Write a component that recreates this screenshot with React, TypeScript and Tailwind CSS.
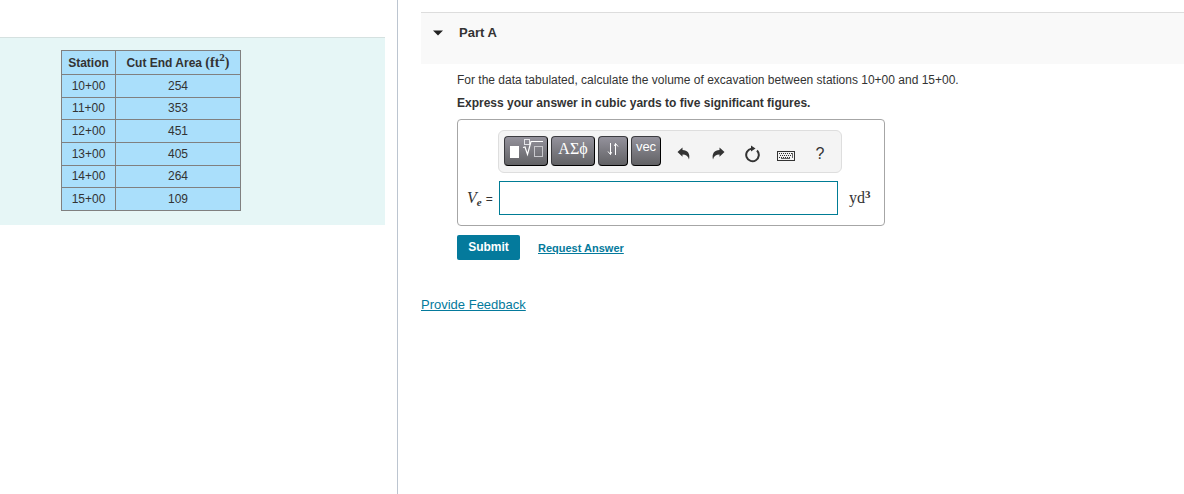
import type { ReactNode } from 'react';

const rows: [string, number][] = [
  ['10+00', 254],
  ['11+00', 353],
  ['12+00', 451],
  ['13+00', 405],
  ['14+00', 264],
  ['15+00', 109],
];

function DataTable() {
  return (
    <table className="ml-[61px] h-[161px] w-[180px] border-collapse bg-[#aadffb] text-center text-xs leading-4">
      <thead>
        <tr className="h-6">
          <th className="w-[54px] border border-[#808080] p-0">Station</th>
          <th className="border border-[#808080] p-0">
            Cut End Area <span className="font-['Liberation_Serif',serif] text-sm leading-4">(ft<sup className="text-[11px] leading-none">2</sup>)</span>
          </th>
        </tr>
      </thead>
      <tbody>
        {rows.map(([station, area]) => (
          <tr key={station}>
            <td className="border border-[#808080] p-0">{station}</td>
            <td className="border border-[#808080] p-0">{area}</td>
          </tr>
        ))}
      </tbody>
    </table>
  );
}

function KeyButton({ label, className, children }: { label: string; className: string; children: ReactNode }) {
  return (
    <button
      type="button"
      aria-label={label}
      className={`flex h-[30px] shrink-0 justify-center rounded-[4px] border border-[#3c3c40] border-r-black border-b-black bg-linear-to-b from-[#94929c] to-[#626265] text-white ${className}`}
    >
      {children}
    </button>
  );
}

function ToolButton({ label, children }: { label: string; children: ReactNode }) {
  return (
    <button type="button" aria-label={label} className="flex h-[30px] w-[34px] shrink-0 items-center justify-center pt-1.5 text-[#333]">
      {children}
    </button>
  );
}

function Toolbar() {
  return (
    <div className="flex h-[43px] w-[344px] items-start rounded-md border border-[#dedede] bg-[#f4f4f4] px-[5px] pt-[5px]">
      <div className="flex gap-[3px]">
        <KeyButton label="Templates" className="w-11">
          <svg width="40" height="27" viewBox="0 0 40 27" fill="none">
            <rect x="4" y="9" width="9" height="12" fill="#fff" />
            <rect x="18.500" y="2.500" width="5" height="5" stroke="#e4e4e8" />
            <path d="M17 10.500L19 10L21.500 17.500L25 4.500H37" stroke="#fff" strokeWidth="1.200" />
            <rect x="28.500" y="9.500" width="8" height="10" stroke="#c8c8cc" />
          </svg>
        </KeyButton>
        <KeyButton label="Greek symbols" className="w-11 font-['Liberation_Serif',serif] text-base leading-[23px]">ΑΣϕ</KeyButton>
        <KeyButton label="Arrows" className="w-[30px]">
          <svg width="14" height="24" viewBox="0 0 14 24" fill="none" stroke="#fff">
            <path d="M4.500 6V17.500M2 14.500L4.500 17.500L5.500 15M9.500 18V6.500M8.500 9L9.500 6.500L12 9.500" />
          </svg>
        </KeyButton>
        <KeyButton label="Vector" className="w-[30px] text-[13px] leading-5">vec</KeyButton>
      </div>
      <div className="ml-1.5 flex">
        <ToolButton label="Undo">
          <svg width="14" height="14" viewBox="0 0 14 14" fill="currentColor">
            <path d="M0.500 5L5.500 0.500V3C10.500 3.200 13.500 6.500 12 12.500C11.200 9.200 9 7.600 5.500 7.500V9.800Z" />
          </svg>
        </ToolButton>
        <ToolButton label="Redo">
          <svg width="14" height="14" viewBox="0 0 14 14" fill="currentColor">
            <path d="M13.500 5L8.500 0.500V3C3.500 3.200 0.500 6.500 2 12.500C2.800 9.200 5 7.600 8.500 7.500V9.800Z" />
          </svg>
        </ToolButton>
        <ToolButton label="Reset">
          <svg width="16" height="18" viewBox="0 0 16 18" fill="none">
            <path d="M13 5.500A6.300 6.300 0 1 1 7.500 3.700" stroke="currentColor" strokeWidth="2" />
            <path d="M7 0.500L11.500 3.500L7 6.500Z" fill="currentColor" />
          </svg>
        </ToolButton>
        <ToolButton label="Keyboard">
          <svg width="18" height="12" viewBox="0 0 18 12" fill="none" className="mt-1">
            <rect x="0.500" y="1.500" width="17" height="9" stroke="currentColor" />
            <path d="M2 3.500H16M3 5.500H14M2 7.500H13" stroke="currentColor" strokeDasharray="1 1" />
            <path d="M4 8.500H13M15.500 3V8" stroke="#666" />
          </svg>
        </ToolButton>
        <ToolButton label="Help"><span className="text-base leading-5">?</span></ToolButton>
      </div>
    </div>
  );
}

export default function App() {
  return (
    <div className="flex min-h-screen bg-white font-['Liberation_Sans',Arial,sans-serif] text-[#333]">
      <aside className="w-[398px] shrink-0 border-r border-[#bcc5d0] pt-[37px] pr-3">
        <div className="border-t border-[#d5e1e0] bg-[#e6f6f6] pt-3 pb-[14px]">
          <DataTable />
        </div>
      </aside>
      <main className="min-w-0 flex-1 pt-3 pl-[23px]">
        <header className="flex h-[52px] items-start border-t border-[#dddddd] bg-[#f9f9f9] pt-[11px] pl-3">
          <button type="button" aria-label="Collapse Part A" className="flex h-[18px] w-[26px] items-center text-[#222]">
            <svg width="10" height="6" viewBox="0 0 10 6" fill="currentColor"><path d="M0 0.500H10L5 5.500Z" /></svg>
          </button>
          <h1 className="text-[13px] leading-[18px] font-bold">Part A</h1>
        </header>
        <form className="pt-2 pl-9" onSubmit={(e) => e.preventDefault()}>
          <p className="text-xs leading-4">
            For the data tabulated, calculate the volume of excavation between stations 10+00 and 15+00.
          </p>
          <p className="mt-[7px] text-xs leading-4 font-bold">Express your answer in cubic yards to five significant figures.</p>
          <div className="mt-2 w-[428px] rounded-[4px] border border-[#a6a6a6] py-2.5">
            <div className="pl-10"><Toolbar /></div>
            <div className="mt-2 flex items-center font-['Liberation_Serif',serif] text-base">
              <label htmlFor="volume" className="w-[41px] shrink-0 pl-[9px] leading-5 whitespace-nowrap">
                <i>V<sub className="text-[11px] leading-none font-bold">e</sub></i> <span className="font-['Liberation_Sans',sans-serif] text-xs">=</span>
              </label>
              <input id="volume" type="text" className="h-[34px] w-[339px] shrink-0 border border-[#007c95] bg-white px-2 outline-none" />
              <span className="ml-[11px] leading-5">yd<sup className="text-[11px] leading-none font-bold">3</sup></span>
            </div>
          </div>
          <div className="mt-[9px] flex items-center gap-[18px]">
            <button type="submit" className="h-[25px] w-[63px] rounded-[2px] bg-[#047a9c] pb-0.5 text-xs font-bold text-white">Submit</button>
            <a href="#answer" className="text-[11px] leading-4 font-bold text-[#047a9c] underline">Request Answer</a>
          </div>
        </form>
        <a href="#feedback" className="mt-9 inline-block text-[13px] leading-[18px] text-[#047a9c] underline">Provide Feedback</a>
      </main>
    </div>
  );
}
